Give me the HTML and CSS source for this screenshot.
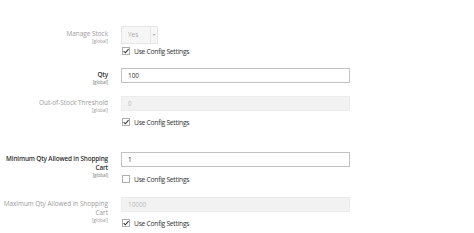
FILE: index.html
```
<!DOCTYPE html>
<html lang="en">
<head>
  <meta charset="UTF-8" />
  <title>Advanced Inventory</title>
  <link rel="stylesheet" href="styles.css">
</head>
<body>
  <div class="inventory">
    <div class="field first">
      <div class="label disabled">
        <span>Manage Stock</span>
        <em>[global]</em>
      </div>
      <div class="control">
        <div class="select">
          <span class="value">Yes</span>
          <span class="arrow">&#9662;</span>
        </div>
        <label class="config">
          <span class="box checked"><svg viewBox="0 0 10 10"><path d="M2 5.2 L4.2 7.3 L8.2 2.6" /></svg></span>
          Use Config Settings
        </label>
      </div>
    </div>

    <div class="field qty">
      <div class="label strong">
        <span>Qty</span>
        <em>[global]</em>
      </div>
      <div class="control">
        <input type="text" class="input" value="100">
      </div>
    </div>

    <div class="field threshold">
      <div class="label disabled">
        <span>Out-of-Stock Threshold</span>
        <em>[global]</em>
      </div>
      <div class="control">
        <input type="text" class="input" value="0" disabled>
        <label class="config">
          <span class="box checked"><svg viewBox="0 0 10 10"><path d="M2 5.2 L4.2 7.3 L8.2 2.6" /></svg></span>
          Use Config Settings
        </label>
      </div>
    </div>

    <div class="field min">
      <div class="label strong">
        <span>Minimum Qty Allowed in Shopping Cart</span>
        <em>[global]</em>
      </div>
      <div class="control">
        <input type="text" class="input" value="1">
        <label class="config">
          <span class="box"></span>
          Use Config Settings
        </label>
      </div>
    </div>

    <div class="field max">
      <div class="label disabled">
        <span>Maximum Qty Allowed in Shopping Cart</span>
        <em>[global]</em>
      </div>
      <div class="control">
        <input type="text" class="input" value="10000" disabled>
        <label class="config">
          <span class="box checked"><svg viewBox="0 0 10 10"><path d="M2 5.2 L4.2 7.3 L8.2 2.6" /></svg></span>
          Use Config Settings
        </label>
      </div>
    </div>
  </div>
</body>
</html>
```
FILE: styles.css
```
body {
  margin: 0;
  background: #fff;
  font-family: "Open Sans", "Noto Sans", sans-serif;
  color: #303030;
}

.inventory {
  padding-top: 26px;
}

.field {
  display: flex;
  align-items: flex-start;
}

.field.qty { margin-top: 12px; }
.field.threshold { margin-top: 10px; }
.field.min { margin-top: 25px; }
.field.max { margin-top: 13px; }

.label {
  width: 110px;
  margin-left: -2px;
  padding-right: 13px;
  text-align: right;
  font-size: 6.4px;
  line-height: 9px;
  padding-top: 2px;
}

.first .label {
  padding-top: 3px;
}

.label span {
  display: block;
}

.label em {
  display: block;
  font-style: normal;
  font-size: 4.6px;
  line-height: 7px;
  color: #9a9a9a;
}

.label.disabled {
  color: #9a9a9a;
}

.label.strong {
  font-weight: 600;
  letter-spacing: -0.15px;
  color: #303030;
}

.control {
  width: 229px;
}

.select {
  display: flex;
  width: 37px;
  height: 18px;
  box-sizing: border-box;
  border: 1px solid #e6e6e6;
  background: #f6f6f6;
  font-size: 6.4px;
  color: #a8a8a8;
}

.select .value {
  width: 22px;
  padding-left: 6px;
  line-height: 16px;
  border-right: 1px solid #e6e6e6;
}

.select .arrow {
  flex: 1;
  text-align: center;
  line-height: 16px;
  font-size: 4px;
  color: #9a9a9a;
}

.input {
  display: block;
  width: 229px;
  height: 15px;
  box-sizing: border-box;
  margin: 0;
  padding: 0 0 0 6px;
  border: 1px solid #c2c2c2;
  background: #fff;
  font-family: inherit;
  font-size: 6.4px;
  color: #303030;
  outline: none;
}

.input:disabled {
  border-color: #ececec;
  background: #f2f2f2;
  color: #bdbdbd;
}

.config {
  display: flex;
  align-items: center;
  height: 10px;
  margin-top: 6px;
  font-size: 6.7px;
  letter-spacing: -0.25px;
  color: #303030;
}

.first .config {
  margin-top: 2px;
}

.min .config {
  margin-top: 7px;
}

.box {
  width: 8px;
  height: 8px;
  box-sizing: border-box;
  margin-left: 1px;
  margin-right: 4px;
  border: 1px solid #adadad;
  background: #fff;
  display: flex;
}

.box svg {
  width: 8px;
  height: 8px;
  margin: -1px;
}

.box path {
  fill: none;
  stroke: #303030;
  stroke-width: 1.3;
}
```
